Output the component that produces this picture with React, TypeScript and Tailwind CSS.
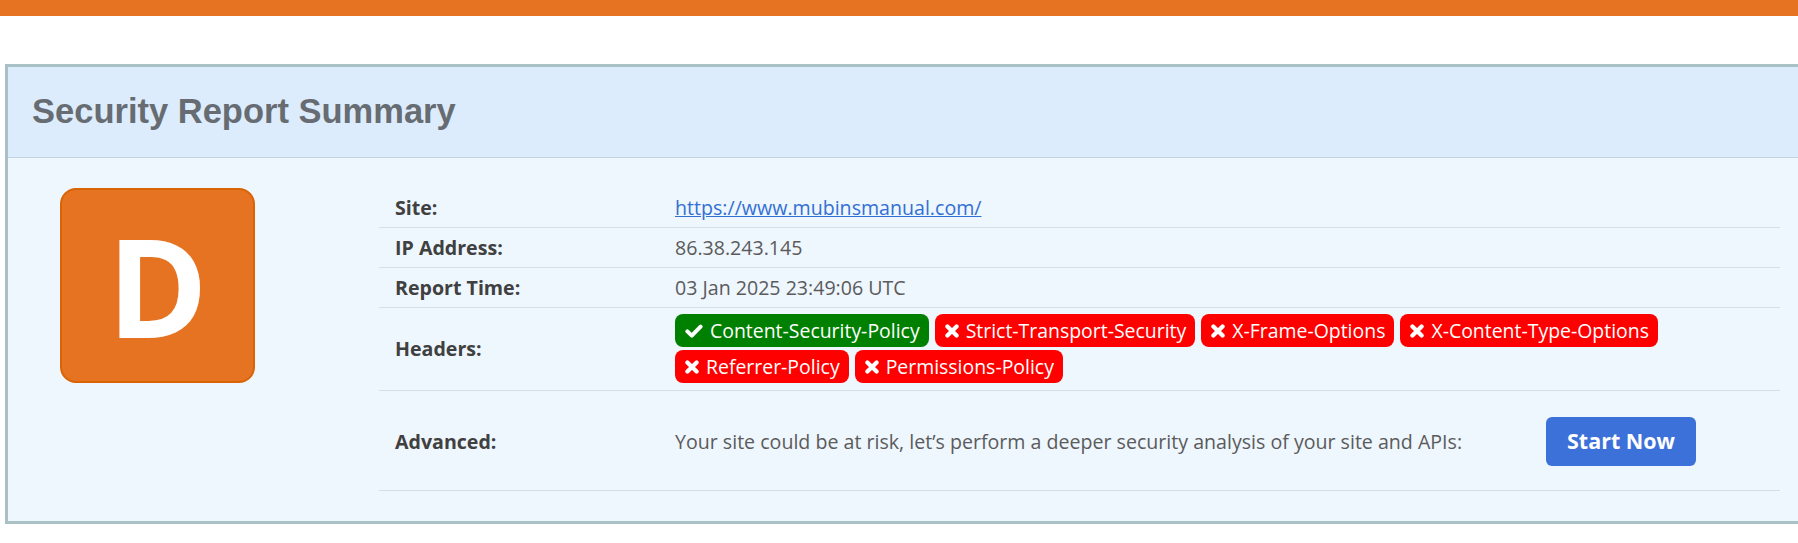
type Header = { name: string; ok: boolean }

const headers: Header[] = [
  { name: 'Content-Security-Policy', ok: true },
  { name: 'Strict-Transport-Security', ok: false },
  { name: 'X-Frame-Options', ok: false },
  { name: 'X-Content-Type-Options', ok: false },
  { name: 'Referrer-Policy', ok: false },
  { name: 'Permissions-Policy', ok: false },
]

// chunky check / cross, like the old icon font glyphs
const CheckIcon = () => (
  <svg width="18" height="14" viewBox="0 0 18 14" className="mr-[7px]">
    <polyline points="2.4,7.4 6.8,11.6 15.6,2.6" fill="none" stroke="white" strokeWidth="4" strokeLinecap="round" strokeLinejoin="round" />
  </svg>
)

const CrossIcon = () => (
  <svg width="14" height="14" viewBox="0 0 14 14" className="mr-[7px]">
    <path d="M2.4 2.4 L11.6 11.6 M11.6 2.4 L2.4 11.6" stroke="white" strokeWidth="4.2" strokeLinecap="round" />
  </svg>
)

const Badge = ({ name, ok }: Header) => (
  <span
    className={`inline-flex h-[33px] items-center rounded-[8px] pl-[10px] pr-[9px] text-[19.45px] text-white ${
      ok ? 'bg-[#008000]' : 'bg-[#ff0000]'
    }`}
  >
    {ok ? <CheckIcon /> : <CrossIcon />}
    {name}
  </span>
)

const Row = ({ label, children, className }: { label: string; children: React.ReactNode; className: string }) => (
  <div className={`flex items-center border-b border-[#d7dee5] ${className}`}>
    <div className="w-[296px] shrink-0 pl-[16px] font-bold text-[#404040]">{label}</div>
    <div className="flex-1">{children}</div>
  </div>
)

export default function App() {
  return (
    <div className="min-h-[543px] w-full overflow-hidden bg-white font-['Open_Sans',sans-serif]">
      <div className="h-[16px] bg-[#e57322]" />

      <div className="ml-[5px] mt-[48px] w-[1800px] border-[3px] border-[#a9c1c4] bg-[#eef6fe]">
        <div className="flex h-[91px] items-center border-b border-[#c2d3e0] bg-[#dcecfc] pl-[24px]">
          <h2 className="font-['Liberation_Sans',Arial,sans-serif] text-[34.5px] font-bold text-[#676c72]">
            Security Report Summary
          </h2>
        </div>

        <div className="flex pb-[30px] pt-[30px]">
          <div className="ml-[52px] flex h-[195px] w-[195px] shrink-0 items-center justify-center rounded-[16px] border-2 border-[#da6306] bg-[#e57322]">
            <span className="text-[136px] font-bold leading-none text-white">D</span>
          </div>

          <div className="ml-[124px] w-[1401px] text-[19.6px]">
            <Row label="Site:" className="h-[40px]">
              <a href="#" className="text-[#3370d4] underline">
                https://www.mubinsmanual.com/
              </a>
            </Row>
            <Row label="IP Address:" className="h-[40px]">
              <span className="text-[#5b5b5b]">86.38.243.145</span>
            </Row>
            <Row label="Report Time:" className="h-[40px]">
              <span className="text-[#5b5b5b]">03 Jan 2025 23:49:06 UTC</span>
            </Row>
            <Row label="Headers:" className="pb-[7px] pt-[6px]">
              <div className="flex flex-wrap gap-x-[6px] gap-y-[3px]">
                {headers.map(h => (
                  <Badge key={h.name} {...h} />
                ))}
              </div>
            </Row>
            <Row label="Advanced:" className="h-[100px] pt-[2px]">
              <div className="flex items-center">
                <p className="w-[871px] text-[#5b5b5b]">
                  Your site could be at risk, let’s perform a deeper security analysis of your site and APIs:
                </p>
                <button className="h-[49px] w-[150px] rounded-[6px] bg-[#3b71d9] text-[21.5px] font-bold text-white">
                  Start Now
                </button>
              </div>
            </Row>
          </div>
        </div>
      </div>
    </div>
  )
}
